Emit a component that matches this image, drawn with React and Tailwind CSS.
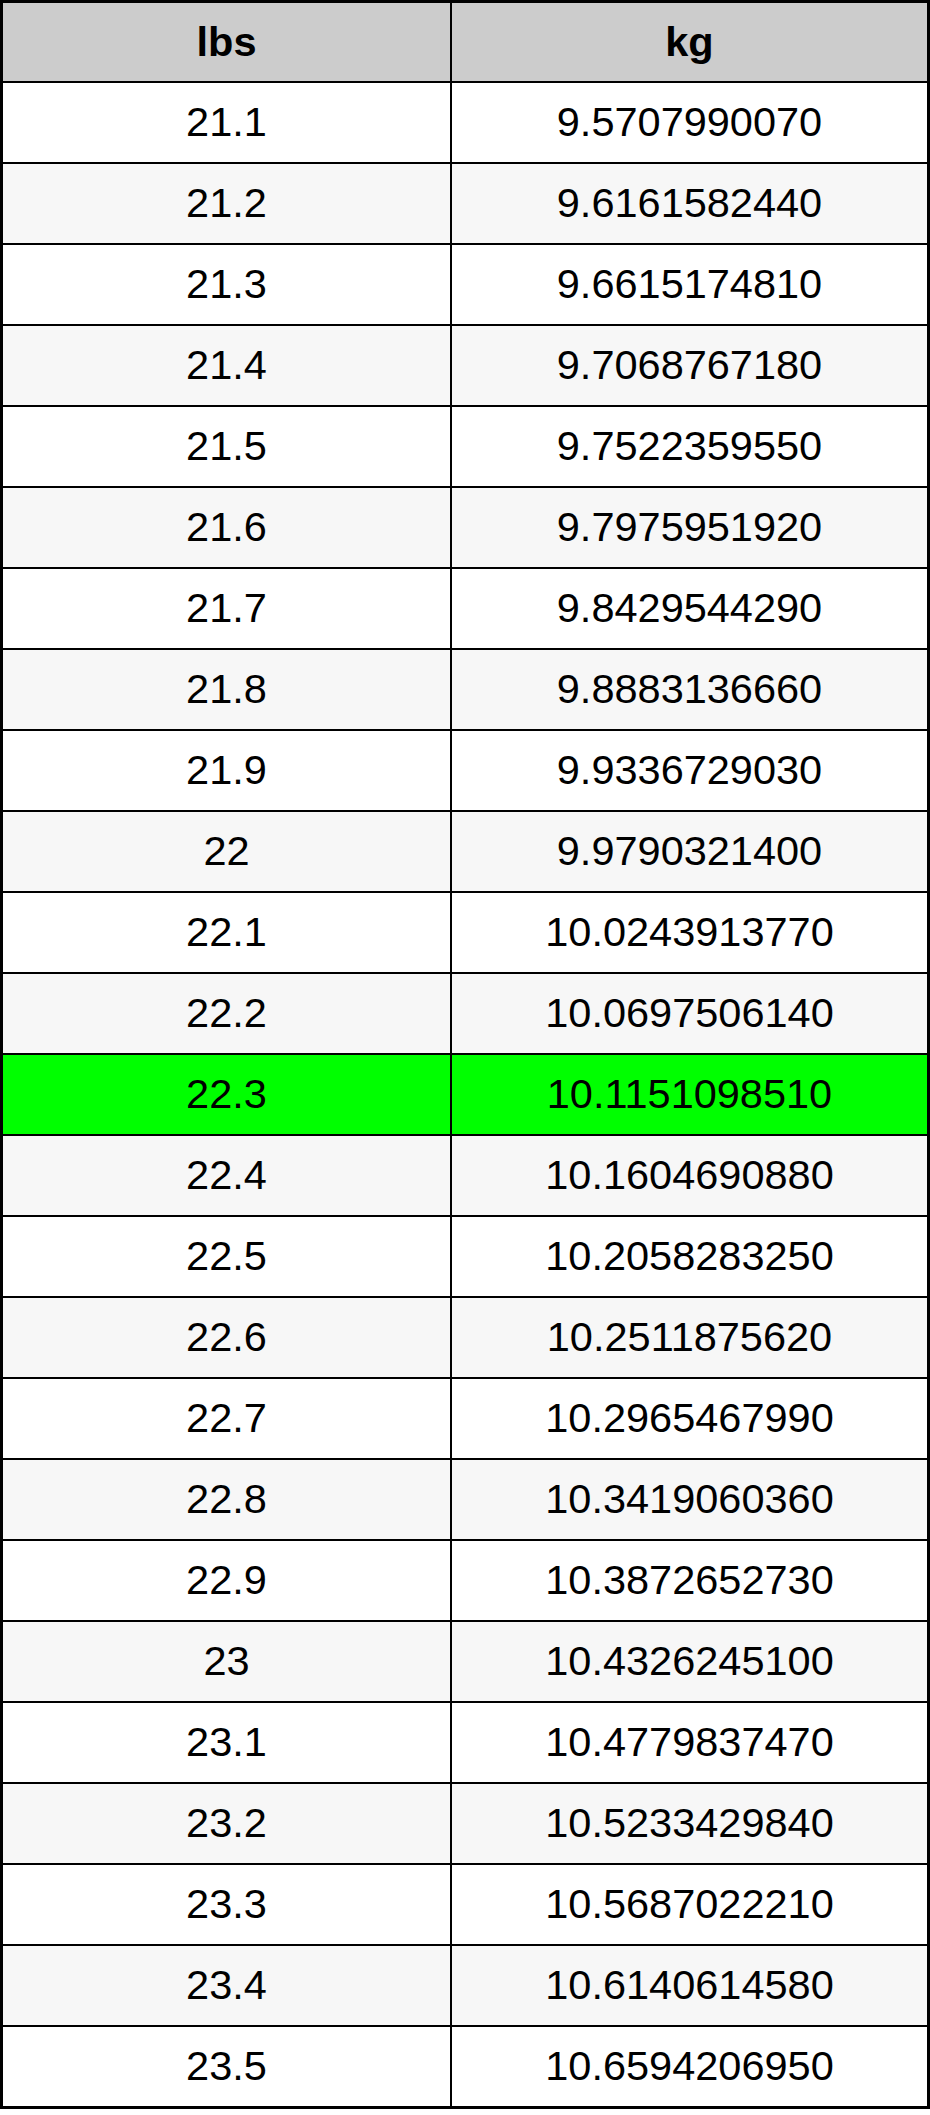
const rows = [
  ["21.1", "9.5707990070"],
  ["21.2", "9.6161582440"],
  ["21.3", "9.6615174810"],
  ["21.4", "9.7068767180"],
  ["21.5", "9.7522359550"],
  ["21.6", "9.7975951920"],
  ["21.7", "9.8429544290"],
  ["21.8", "9.8883136660"],
  ["21.9", "9.9336729030"],
  ["22", "9.9790321400"],
  ["22.1", "10.0243913770"],
  ["22.2", "10.0697506140"],
  ["22.3", "10.1151098510"],
  ["22.4", "10.1604690880"],
  ["22.5", "10.2058283250"],
  ["22.6", "10.2511875620"],
  ["22.7", "10.2965467990"],
  ["22.8", "10.3419060360"],
  ["22.9", "10.3872652730"],
  ["23", "10.4326245100"],
  ["23.1", "10.4779837470"],
  ["23.2", "10.5233429840"],
  ["23.3", "10.5687022210"],
  ["23.4", "10.6140614580"],
  ["23.5", "10.6594206950"],
];

export default function App() {
  return (
    <div className="w-[930px] bg-white text-black" style={{ fontFamily: '"Liberation Sans", Arial, sans-serif' }}>
      <div className="border-[3px] border-black">
        <div className="flex h-[78px] bg-[#cccccc] font-bold text-[41.5px]">
          <div className="w-[449px] border-r-2 border-black flex items-center justify-center">lbs</div>
          <div className="flex-1 flex items-center justify-center">kg</div>
        </div>
        {rows.map(([a, b], i) => {
          const bg = a === "22.3" ? "bg-[#00ff00]" : i % 2 === 1 ? "bg-[#f7f7f7]" : "bg-white";
          return (
            <div key={a} className={`flex h-[81px] border-t-2 border-black text-[41.5px] ${bg}`}>
              <div className="w-[449px] border-r-2 border-black flex items-center justify-center">{a}</div>
              <div className="flex-1 flex items-center justify-center">{b}</div>
            </div>
          );
        })}
      </div>
    </div>
  );
}
